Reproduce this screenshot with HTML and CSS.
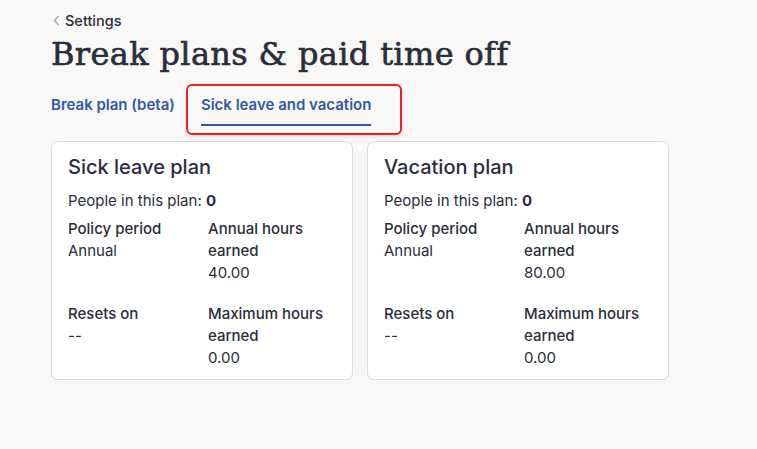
FILE: index.html
```html
<!DOCTYPE html>
<html lang="en">
<head>
    <meta charset="UTF-8">
    <meta name="viewport" content="width=device-width, initial-scale=1.0">
    <title>Break plans &amp; paid time off</title>
    <link rel="stylesheet" href="styles.css">
</head>
<body>
    <main class="page">
        <a class="back-link" href="#">
            <svg width="7" height="11" viewBox="0 0 7 11"><path d="M5.5 1 L1.5 5.5 L5.5 10" fill="none" stroke="#a3a5ab" stroke-width="1.2"/></svg>
            Settings
        </a>
        <h1 class="page-title">Break plans &amp; paid time off</h1>

        <nav class="tabs">
            <a href="#" class="tab">Break plan (beta)</a>
            <div class="tab-highlight">
                <a href="#" class="tab active">Sick leave and vacation</a>
            </div>
        </nav>

        <div class="plans">
            <section class="plan-card">
                <h2>Sick leave plan</h2>
                <p class="people">People in this plan: <strong>0</strong></p>
                <div class="plan-grid">
                    <div class="field">
                        <span class="label">Policy period</span>
                        <span class="value">Annual</span>
                    </div>
                    <div class="field">
                        <span class="label">Annual hours earned</span>
                        <span class="value">40.00</span>
                    </div>
                    <div class="field">
                        <span class="label">Resets on</span>
                        <span class="value">--</span>
                    </div>
                    <div class="field">
                        <span class="label">Maximum hours earned</span>
                        <span class="value">0.00</span>
                    </div>
                </div>
            </section>

            <section class="plan-card">
                <h2>Vacation plan</h2>
                <p class="people">People in this plan: <strong>0</strong></p>
                <div class="plan-grid">
                    <div class="field">
                        <span class="label">Policy period</span>
                        <span class="value">Annual</span>
                    </div>
                    <div class="field">
                        <span class="label">Annual hours earned</span>
                        <span class="value">80.00</span>
                    </div>
                    <div class="field">
                        <span class="label">Resets on</span>
                        <span class="value">--</span>
                    </div>
                    <div class="field">
                        <span class="label">Maximum hours earned</span>
                        <span class="value">0.00</span>
                    </div>
                </div>
            </section>
        </div>
    </main>
</body>
</html>
```

FILE: styles.css
```css
body {
    margin: 0;
    background-color: #f9f8f7;
    font-family: Inter, "Noto Sans", sans-serif;
    color: #2a2d3b;
}
.page {
    padding: 10px 0 0 51px;
}
.back-link {
    display: flex;
    align-items: center;
    gap: 5px;
    color: #2a2d3b;
    text-decoration: none;
    font-size: 14.5px;
    font-weight: 500;
    margin-left: 2px;
    height: 20px;
}
.page-title {
    margin: 2px 0 0 0;
    font-family: "DejaVu Serif", serif;
    font-weight: 400;
    font-size: 32px;
    letter-spacing: 0.35px;
    line-height: 44px;
    -webkit-text-stroke: 0.6px currentColor;
}
.tabs {
    display: flex;
    align-items: flex-start;
    margin-top: 8px;
    gap: 11px;
}
.tab {
    color: #2f5aa5;
    text-decoration: none;
    font-size: 15px;
    font-weight: 600;
    line-height: 20px;
}
.tabs > .tab {
    margin-top: 11px;
}
.tab-highlight {
    border: 2px solid #e8202a;
    border-radius: 6px;
    padding: 9px 29px 7px 13px;
    box-shadow: 0 1px 4px rgba(0, 0, 0, 0.15);
}
.tab.active {
    display: block;
    padding-bottom: 9px;
    border-bottom: 2px solid #2f5aa5;
}
.plans {
    display: flex;
    gap: 14px;
    margin-top: 6px;
}
.plan-card {
    width: 268px;
    background-color: #fff;
    border: 1px solid #dcdad8;
    border-radius: 7px;
    padding: 11px 16px 10px 16px;
}
.plan-card h2 {
    margin: 0;
    font-size: 20px;
    font-weight: 500;
    line-height: 28px;
}
.people {
    margin: 9px 0 6px 0;
    font-size: 15px;
    line-height: 22px;
}
.people strong {
    font-weight: 700;
}
.plan-grid {
    display: grid;
    grid-template-columns: 140px 1fr;
    row-gap: 19px;
    font-size: 15px;
    line-height: 22px;
}
.field {
    display: flex;
    flex-direction: column;
}
.label {
    font-weight: 500;
}
```
